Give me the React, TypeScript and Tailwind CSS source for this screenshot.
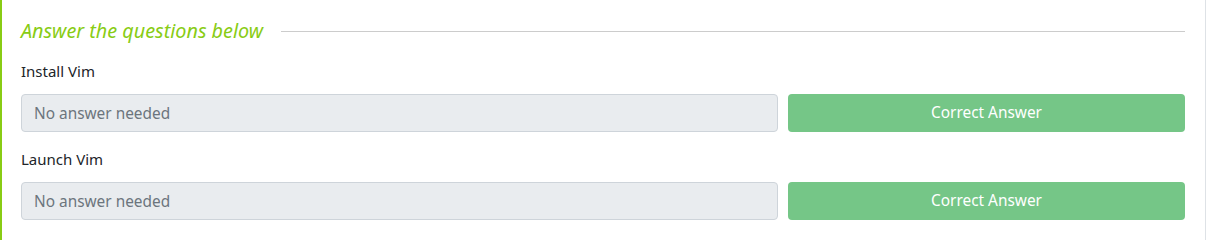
export default function App() {
	const questions = ['Install Vim', 'Launch Vim'];

	return (
		<div className="h-[240px] w-[1206px] bg-white" style={{ fontFamily: '"Noto Sans", "Open Sans", sans-serif' }}>
			<div className="h-full border-l-2 border-r border-l-[#88cc14] border-r-[#dee2e6] pl-[19px] pr-5">
				<div className="flex items-center gap-[18px] pt-[19px]">
					<h3 className="text-[19.8px] leading-6 italic text-[#88cc14]">Answer the questions below</h3>
					<div className="h-px flex-1 bg-[#cccccc]" />
				</div>
				<div className="mt-[18px] flex flex-col gap-[17px]">
					{questions.map(q => (
						<div key={q}>
							<p className="text-[15px] leading-5 text-[#212529]">{q}</p>
							<div className="mt-[13px] flex gap-[10px]">
								<input
									disabled
									placeholder="No answer needed"
									className="h-[38px] w-[757px] rounded border border-[#ced4da] bg-[#e9ecef] px-3 text-[15.4px] text-[#495057] placeholder:text-[#6c757d]"
								/>
								<button className="h-[38px] flex-1 rounded bg-[#75c687] text-[15.4px] text-white">Correct Answer</button>
							</div>
						</div>
					))}
				</div>
			</div>
		</div>
	);
}
